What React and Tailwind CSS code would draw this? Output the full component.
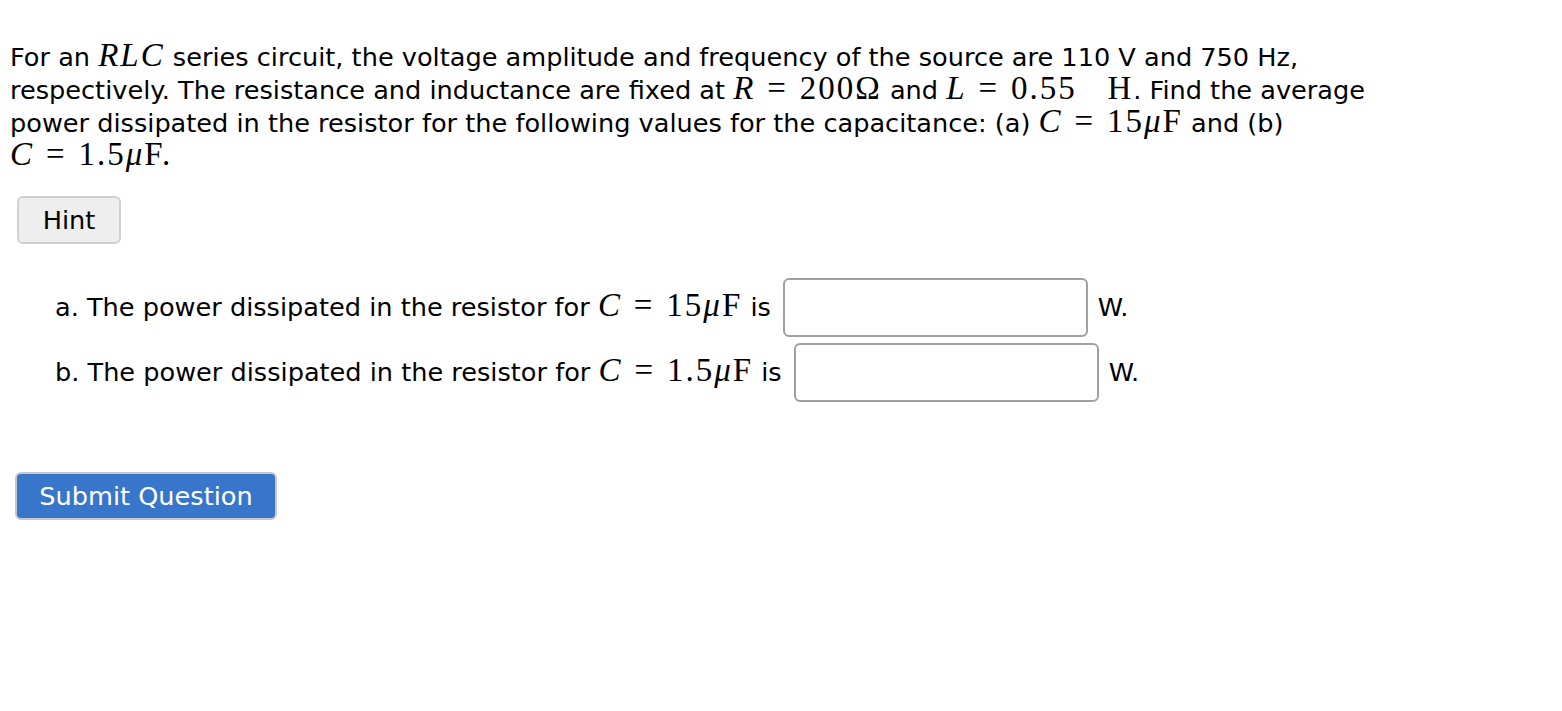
import React from 'react';

const sans = { fontFamily: '"DejaVu Sans", Verdana, sans-serif' };

function M({ children }) {
  return <span className="font-['Liberation_Serif',serif] text-[33px] leading-[0px] tracking-[2px]">{children}</span>;
}
function I({ children }) {
  return <i>{children}</i>;
}
function Eq() {
  return <span className="mx-[0.36em]">=</span>;
}

export default function App() {
  return (
    <div className="min-h-screen bg-white text-black pl-[10px] pt-[41px]" style={sans}>
      <p className="text-[25.6px] leading-[33px]">
        For an <M><I>RLC</I></M> series circuit, the voltage amplitude and frequency of the source are 110 V and 750 Hz,
        <br />
        respectively. The resistance and inductance are fixed at <M><I>R</I><Eq />200Ω</M> and <M><I>L</I><Eq />0.55 &nbsp; H</M>. Find the average
        <br />
        power dissipated in the resistor for the following values for the capacitance: (a) <M><I>C</I><Eq />15<I>μ</I>F</M> and (b)
        <br />
        <M><I>C</I><Eq />1.5<I>μ</I>F.</M>
      </p>

      <button className="mt-[23px] ml-[7px] h-[48px] w-[104px] rounded-[6px] border-2 border-[#d0d0d0] bg-[#eeeeee] text-[25.6px]">
        Hint
      </button>

      <div className="mt-[34px] pl-[45px] flex flex-col gap-[6px] text-[25.6px]">
        <div className="flex items-center">
          <span>a. The power dissipated in the resistor for <M><I>C</I><Eq />15<I>μ</I>F</M> is</span>
          <input className="ml-[12px] h-[59px] w-[305px] rounded-[6px] border-2 border-[#a0a0a0] bg-white" />
          <span className="ml-[10px]">W.</span>
        </div>
        <div className="flex items-center">
          <span>b. The power dissipated in the resistor for <M><I>C</I><Eq />1.5<I>μ</I>F</M> is</span>
          <input className="ml-[12px] h-[59px] w-[305px] rounded-[6px] border-2 border-[#a0a0a0] bg-white" />
          <span className="ml-[10px]">W.</span>
        </div>
      </div>

      <button className="mt-[70px] ml-[5px] h-[48px] w-[262px] rounded-[6px] border-2 border-[#c8c8c8] bg-[#3876cc] text-[25.6px] text-white">
        Submit Question
      </button>
    </div>
  );
}
